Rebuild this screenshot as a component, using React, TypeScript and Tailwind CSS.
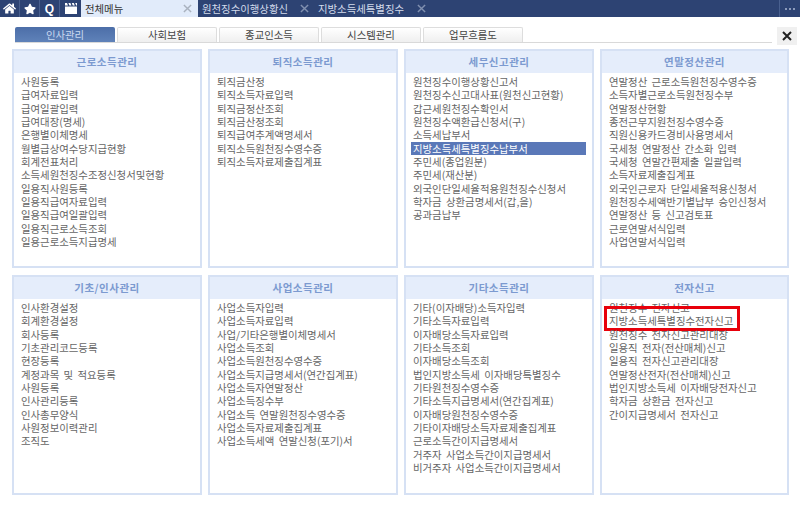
import { FaHome, FaStar } from "react-icons/fa";

type Group = { title: string; items: string[]; active?: string; marked?: string };

const rows: Group[][] = [
  [
    {
      title: "근로소득관리",
      items: ["사원등록", "급여자료입력", "급여일괄입력", "급여대장(명세)", "은행별이체명세", "월별급상여수당지급현황", "회계전표처리", "소득세원천징수조정신청서및현황", "일용직사원등록", "일용직급여자료입력", "일용직급여일괄입력", "일용직근로소득조회", "일용근로소득지급명세"],
    },
    {
      title: "퇴직소득관리",
      items: ["퇴직금산정", "퇴직소득자료입력", "퇴직금정산조회", "퇴직금산정조회", "퇴직급여추계액명세서", "퇴직소득원천징수영수증", "퇴직소득자료제출집계표"],
    },
    {
      title: "세무신고관리",
      active: "지방소득세특별징수납부서",
      items: ["원천징수이행상황신고서", "원천징수신고대사표(원천신고현황)", "갑근세원천징수확인서", "원천징수액환급신청서(구)", "소득세납부서", "지방소득세특별징수납부서", "주민세(종업원분)", "주민세(재산분)", "외국인단일세율적용원천징수신청서", "학자금 상환금명세서(갑,을)", "공과금납부"],
    },
    {
      title: "연말정산관리",
      items: ["연말정산 근로소득원천징수영수증", "소득자별근로소득원천징수부", "연말정산현황", "종전근무지원천징수영수증", "직원신용카드경비사용명세서", "국세청 연말정산 간소화 입력", "국세청 연말간편제출 일괄입력", "소득자료제출집계표", "외국인근로자 단일세율적용신청서", "원천징수세액반기별납부 승인신청서", "연말정산 등 신고검토표", "근로연말서식입력", "사업연말서식입력"],
    },
  ],
  [
    {
      title: "기초/인사관리",
      items: ["인사환경설정", "회계환경설정", "회사등록", "기초관리코드등록", "현장등록", "계정과목 및 적요등록", "사원등록", "인사관리등록", "인사총무양식", "사원정보이력관리", "조직도"],
    },
    {
      title: "사업소득관리",
      items: ["사업소득자입력", "사업소득자료입력", "사업/기타은행별이체명세서", "사업소득조회", "사업소득원천징수영수증", "사업소득지급명세서(연간집계표)", "사업소득자연말정산", "사업소득징수부", "사업소득 연말원천징수영수증", "사업소득자료제출집계표", "사업소득세액 연말신청(포기)서"],
    },
    {
      title: "기타소득관리",
      items: ["기타(이자배당)소득자입력", "기타소득자료입력", "이자배당소득자료입력", "기타소득조회", "이자배당소득조회", "법인지방소득세 이자배당특별징수", "기타원천징수영수증", "기타소득지급명세서(연간집계표)", "이자배당원천징수영수증", "기타이자배당소득자료제출집계표", "근로소득간이지급명세서", "거주자 사업소득간이지급명세서", "비거주자 사업소득간이지급명세서"],
    },
    {
      title: "전자신고",
      marked: "지방소득세특별징수전자신고",
      items: ["원천징수 전자신고", "지방소득세특별징수전자신고", "원천징수 전자신고관리대장", "일용직 전자(전산매체)신고", "일용직 전자신고관리대장", "연말정산전자(전산매체)신고", "법인지방소득세 이자배당전자신고", "학자금 상환금 전자신고", "간이지급명세서 전자신고"],
    },
  ],
];

const subTabs = ["인사관리", "사회보험", "종교인소득", "시스템관리", "업무흐름도"];

function Cross({ size, stroke, color }: { size: number; stroke: number; color: string }) {
  return (
    <svg width={size} height={size} viewBox="0 0 10 10" fill="none" stroke={color} strokeWidth={stroke}>
      <path d="M1 1l8 8M9 1l-8 8" />
    </svg>
  );
}

function Panel({ group }: { group: Group }) {
  return (
    <div className="flex flex-col border-2 border-[#d6e1f4] bg-white">
      <div className="flex h-[22px] shrink-0 items-center justify-center bg-[#e5edfb] text-[10.5px] font-bold tracking-[0.5px] text-[#7c9ad0]">
        {group.title}
      </div>
      <ul className="pt-[2px] pl-[5px] pr-[6px]">
        {group.items.map((item) => (
          <li
            key={item}
            className={
              "relative h-[13.33px] pl-[2px] leading-[13px] whitespace-nowrap " +
              (item === group.active ? "bg-[#5a78b8] text-white" : "text-[#666666]")
            }
          >
            {item}
            {item === group.marked && (
              <span className="absolute left-[-3px] top-[-8px] h-[25px] w-[136px] border-[3px] border-[#e8000b]" />
            )}
          </li>
        ))}
      </ul>
    </div>
  );
}

export default function App() {
  return (
    <div className="h-[511px] w-[800px] overflow-hidden bg-white text-[10.4px] [font-family:'Noto_Sans_CJK_KR','Liberation_Sans',sans-serif] [word-spacing:2px]">
      {/* top bar */}
      <div className="flex h-[17px] items-stretch bg-[#2d4373] text-[#d3dbeb]">
        <div className="flex w-[20px] items-center justify-center border-r border-[#49608f] text-white">
          <FaHome size={13} />
        </div>
        <div className="flex w-[20px] items-center justify-center border-r border-[#49608f] text-white">
          <FaStar size={12} />
        </div>
        <div className="flex w-[20px] items-center justify-center border-r border-[#49608f] text-[12px] font-bold text-white [font-family:'Liberation_Sans',sans-serif]">
          Q
        </div>
        <div className="flex w-[21px] items-center justify-center text-white">
          <svg width="12" height="11" viewBox="0 0 12 11" fill="currentColor">
            <path d="M0 3.5h12V11H0z" />
            <path d="M0 0h2l1 2.6H0zM3.4 0h2l1 2.6h-2zM6.8 0h2l1 2.6h-2zM10.2 0H12v2.6h-.8z" />
          </svg>
        </div>
        <div className="flex w-[117px] items-center justify-between bg-[#e1ebfa] pl-[4px] pr-[6px] text-[#333333]">
          <span>전체메뉴</span>
          <Cross size={9} stroke={1.6} color="#a9b2bf" />
        </div>
        <div className="flex w-[120px] items-center justify-between pl-[4px] pr-[9px]">
          <span className="whitespace-nowrap">원천징수이행상황신</span>
          <Cross size={9} stroke={1.6} color="#8090b0" />
        </div>
        <div className="flex w-[117px] items-center justify-between pr-[9px]">
          <span className="whitespace-nowrap">지방소득세특별징수</span>
          <Cross size={9} stroke={1.6} color="#8090b0" />
        </div>
        <div className="flex-1" />
        <div className="flex w-[21px] items-center justify-center gap-[2px] border-l border-[#49608f]">
          <i className="h-[2px] w-[2px] bg-[#8c9bbb]" />
          <i className="h-[2px] w-[2px] bg-[#8c9bbb]" />
          <i className="h-[2px] w-[2px] bg-[#8c9bbb]" />
        </div>
      </div>

      {/* sub tabs */}
      <div className="flex items-start pl-[15px] pr-[3px] pt-[10px]">
        <div className="flex h-[16px] w-[757px] gap-[2px] border-b border-[#d9d9d9]">
          {subTabs.map((tab, i) => (
            <div
              key={tab}
              className={
                "flex w-[100px] items-center justify-center rounded-t-[2px] " +
                (i === 0
                  ? "bg-gradient-to-b from-[#4c6ea8] to-[#5f82b9] text-[#c9d8ef]"
                  : "border border-b-0 border-[#dddddd] bg-gradient-to-b from-[#ffffff] to-[#efefef] text-[#444444]")
              }
            >
              {tab}
            </div>
          ))}
        </div>
        <div className="ml-auto flex h-[18px] w-[20px] items-center justify-center bg-[#f0f0f0]">
          <Cross size={10} stroke={2} color="#222222" />
        </div>
      </div>

      {/* menu panels */}
      <div className="mt-[4px] grid w-[789px] grid-cols-[190px_190px_190px_189px] grid-rows-[219px_220px] gap-x-[6px] gap-y-[7px] pl-[12px]">
        {rows.flat().map((group) => (
          <Panel key={group.title} group={group} />
        ))}
      </div>
    </div>
  );
}
